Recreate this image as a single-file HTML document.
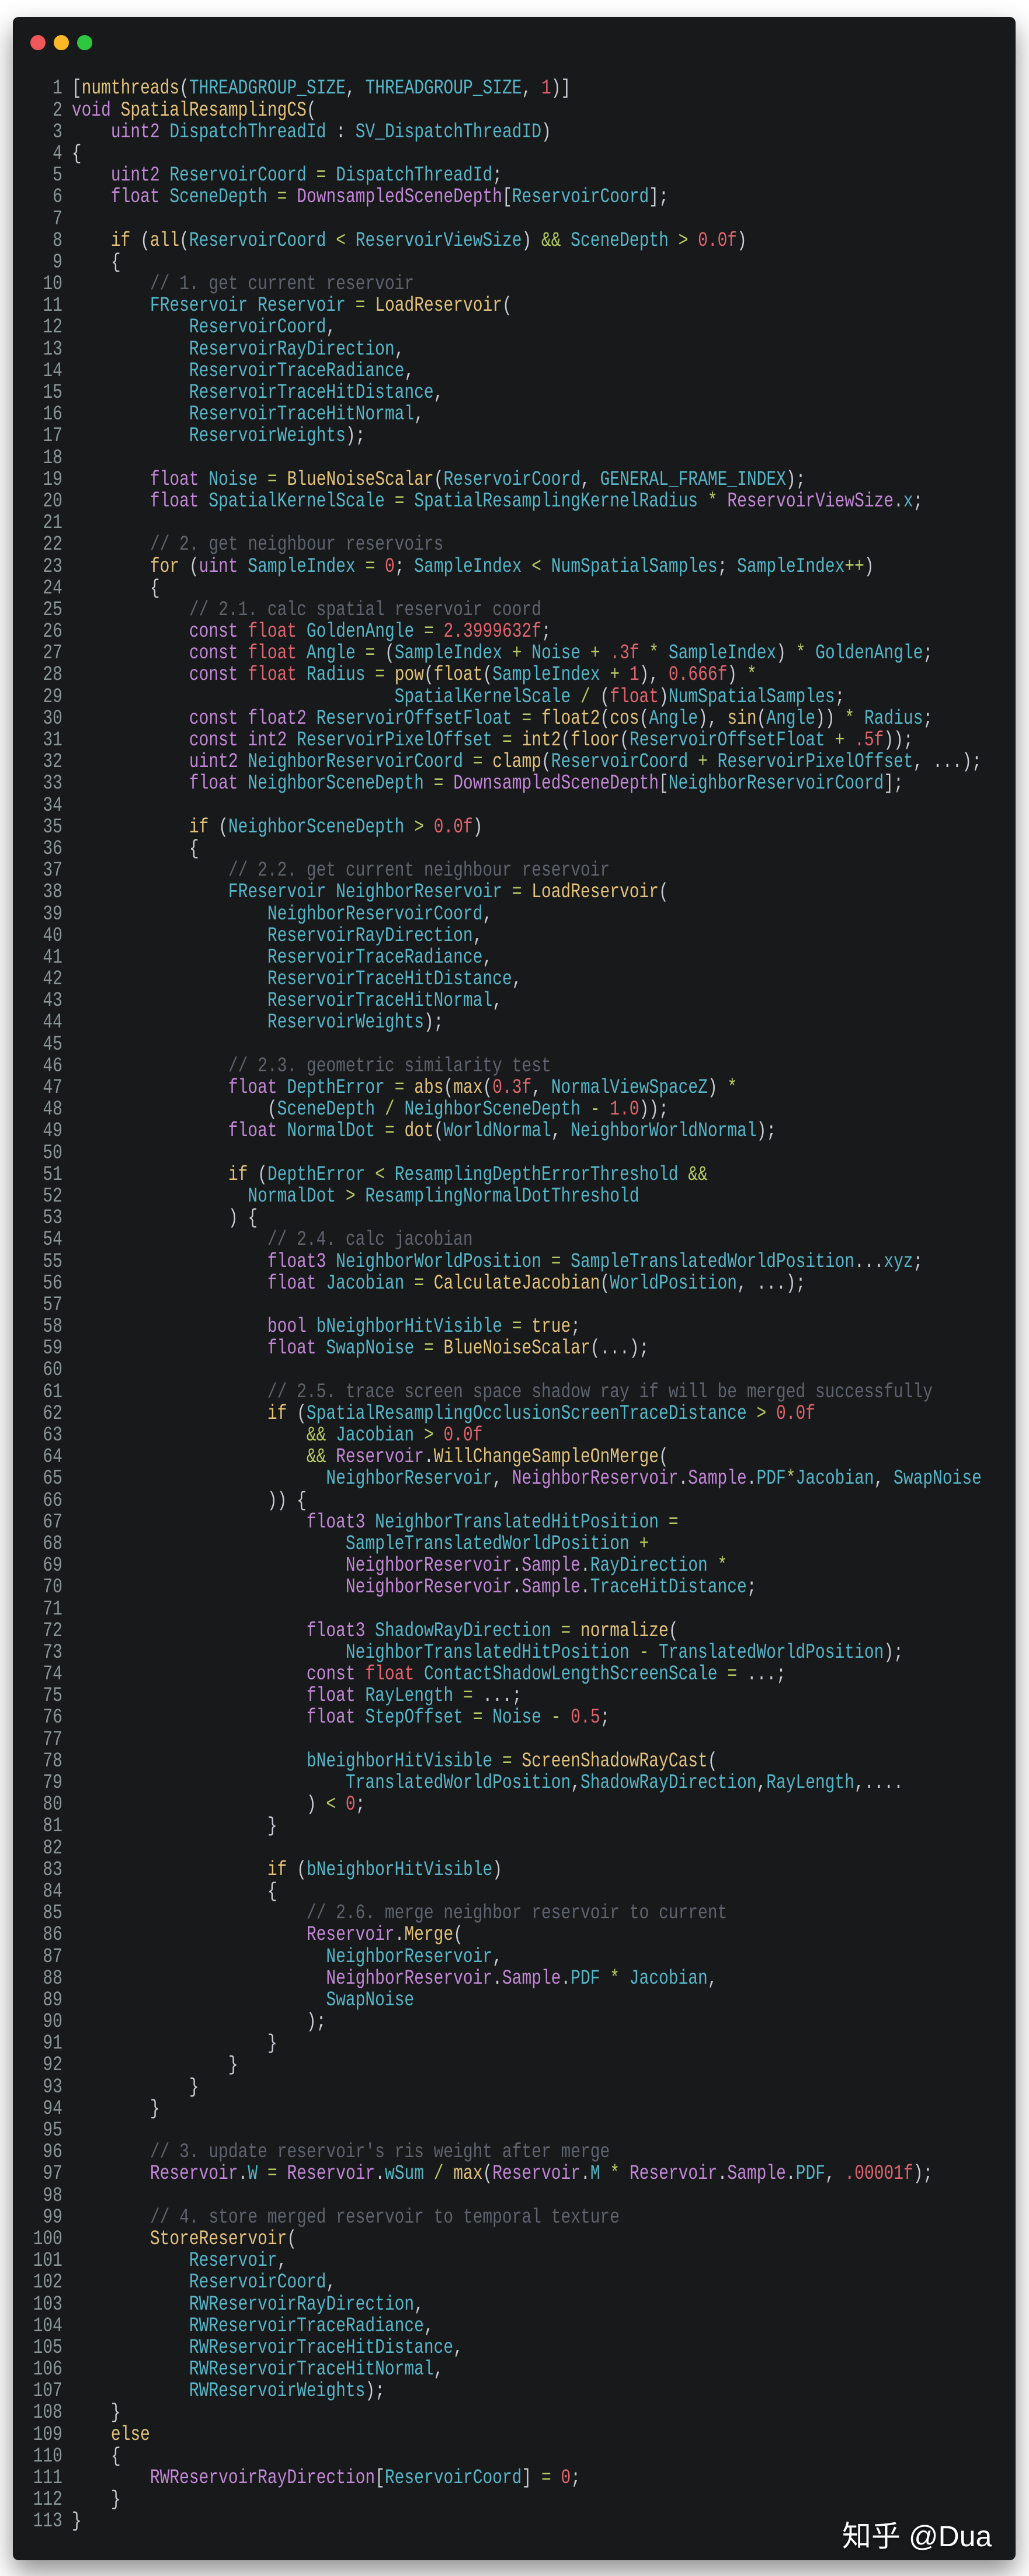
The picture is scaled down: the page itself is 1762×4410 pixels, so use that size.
<!DOCTYPE html>
<html><head><meta charset="utf-8">
<style>
html,body{margin:0;padding:0;background:#fff;}
body{width:1762px;height:4410px;position:relative;overflow:hidden;}
.win{position:absolute;left:22px;top:29px;width:1717px;height:4354px;background:#18191b;border-radius:10px;box-shadow:0 20px 45px rgba(0,0,0,0.45);}
.dot{position:absolute;top:31px;width:26px;height:26px;border-radius:50%;}
.code{position:absolute;left:-22px;top:104.4px;font-family:"Liberation Mono",monospace;font-size:35px;letter-spacing:0;line-height:37.2px;color:#c8ccd4;white-space:normal;counter-reset:ln;transform:scaleX(0.7976);transform-origin:0 0;width:2200px;}
.code div{height:37.2px;position:relative;padding-left:154px;white-space:pre;}
.code div::before{counter-increment:ln;content:counter(ln);position:absolute;left:0;width:134px;text-align:right;color:#8a9696;}
.k{color:#c287d6}.t{color:#56b6c8}.f{color:#e2c27a}.n{color:#e0646e}.o{color:#b3cc62}.c{color:#5d646e}
.wm{position:absolute;left:1442px;top:4302px;font-family:"Liberation Sans","Noto Sans CJK SC",sans-serif;font-size:50px;color:#fff;text-shadow:0 2px 4px rgba(0,0,0,.5);}
</style></head><body>
<div class="win">
<div class="dot" style="left:30px;background:#f0575a"></div>
<div class="dot" style="left:70px;background:#fbb928"></div>
<div class="dot" style="left:110px;background:#2ec840"></div>
<div class="code">
<div>[<span class="f">numthreads</span>(<span class="t">THREADGROUP_SIZE</span>, <span class="t">THREADGROUP_SIZE</span>, <span class="n">1</span>)]</div>
<div><span class="k">void</span> <span class="f">SpatialResamplingCS</span>(</div>
<div>    <span class="k">uint2</span> <span class="t">DispatchThreadId</span> : <span class="t">SV_DispatchThreadID</span>)</div>
<div>{</div>
<div>    <span class="k">uint2</span> <span class="t">ReservoirCoord</span> <span class="o">=</span> <span class="t">DispatchThreadId</span>;</div>
<div>    <span class="k">float</span> <span class="t">SceneDepth</span> <span class="o">=</span> <span class="k">DownsampledSceneDepth</span>[<span class="t">ReservoirCoord</span>];</div>
<div></div>
<div>    <span class="f">if</span> (<span class="f">all</span>(<span class="t">ReservoirCoord</span> <span class="o">&lt;</span> <span class="t">ReservoirViewSize</span>) <span class="o">&amp;&amp;</span> <span class="t">SceneDepth</span> <span class="o">&gt;</span> <span class="n">0.0f</span>)</div>
<div>    {</div>
<div>        <span class="c">// 1. get current reservoir</span></div>
<div>        <span class="t">FReservoir</span> <span class="t">Reservoir</span> <span class="o">=</span> <span class="f">LoadReservoir</span>(</div>
<div>            <span class="t">ReservoirCoord</span>,</div>
<div>            <span class="t">ReservoirRayDirection</span>,</div>
<div>            <span class="t">ReservoirTraceRadiance</span>,</div>
<div>            <span class="t">ReservoirTraceHitDistance</span>,</div>
<div>            <span class="t">ReservoirTraceHitNormal</span>,</div>
<div>            <span class="t">ReservoirWeights</span>);</div>
<div></div>
<div>        <span class="k">float</span> <span class="t">Noise</span> <span class="o">=</span> <span class="f">BlueNoiseScalar</span>(<span class="t">ReservoirCoord</span>, <span class="t">GENERAL_FRAME_INDEX</span>);</div>
<div>        <span class="k">float</span> <span class="t">SpatialKernelScale</span> <span class="o">=</span> <span class="t">SpatialResamplingKernelRadius</span> <span class="o">*</span> <span class="k">ReservoirViewSize</span>.<span class="t">x</span>;</div>
<div></div>
<div>        <span class="c">// 2. get neighbour reservoirs</span></div>
<div>        <span class="f">for</span> (<span class="k">uint</span> <span class="t">SampleIndex</span> <span class="o">=</span> <span class="n">0</span>; <span class="t">SampleIndex</span> <span class="o">&lt;</span> <span class="t">NumSpatialSamples</span>; <span class="t">SampleIndex</span><span class="o">++</span>)</div>
<div>        {</div>
<div>            <span class="c">// 2.1. calc spatial reservoir coord</span></div>
<div>            <span class="k">const</span> <span class="n">float</span> <span class="t">GoldenAngle</span> <span class="o">=</span> <span class="n">2.3999632f</span>;</div>
<div>            <span class="k">const</span> <span class="n">float</span> <span class="t">Angle</span> <span class="o">=</span> (<span class="t">SampleIndex</span> <span class="o">+</span> <span class="t">Noise</span> <span class="o">+</span> <span class="n">.3f</span> <span class="o">*</span> <span class="t">SampleIndex</span>) <span class="o">*</span> <span class="t">GoldenAngle</span>;</div>
<div>            <span class="k">const</span> <span class="n">float</span> <span class="t">Radius</span> <span class="o">=</span> <span class="f">pow</span>(<span class="f">float</span>(<span class="t">SampleIndex</span> <span class="o">+</span> <span class="n">1</span>), <span class="n">0.666f</span>) <span class="o">*</span></div>
<div>                                 <span class="t">SpatialKernelScale</span> <span class="o">/</span> (<span class="n">float</span>)<span class="t">NumSpatialSamples</span>;</div>
<div>            <span class="k">const</span> <span class="k">float2</span> <span class="t">ReservoirOffsetFloat</span> <span class="o">=</span> <span class="f">float2</span>(<span class="f">cos</span>(<span class="t">Angle</span>), <span class="f">sin</span>(<span class="t">Angle</span>)) <span class="o">*</span> <span class="t">Radius</span>;</div>
<div>            <span class="k">const</span> <span class="k">int2</span> <span class="t">ReservoirPixelOffset</span> <span class="o">=</span> <span class="f">int2</span>(<span class="f">floor</span>(<span class="t">ReservoirOffsetFloat</span> <span class="o">+</span> <span class="n">.5f</span>));</div>
<div>            <span class="k">uint2</span> <span class="t">NeighborReservoirCoord</span> <span class="o">=</span> <span class="f">clamp</span>(<span class="t">ReservoirCoord</span> <span class="o">+</span> <span class="t">ReservoirPixelOffset</span>, ...);</div>
<div>            <span class="k">float</span> <span class="t">NeighborSceneDepth</span> <span class="o">=</span> <span class="k">DownsampledSceneDepth</span>[<span class="t">NeighborReservoirCoord</span>];</div>
<div></div>
<div>            <span class="f">if</span> (<span class="t">NeighborSceneDepth</span> <span class="o">&gt;</span> <span class="n">0.0f</span>)</div>
<div>            {</div>
<div>                <span class="c">// 2.2. get current neighbour reservoir</span></div>
<div>                <span class="t">FReservoir</span> <span class="t">NeighborReservoir</span> <span class="o">=</span> <span class="f">LoadReservoir</span>(</div>
<div>                    <span class="t">NeighborReservoirCoord</span>,</div>
<div>                    <span class="t">ReservoirRayDirection</span>,</div>
<div>                    <span class="t">ReservoirTraceRadiance</span>,</div>
<div>                    <span class="t">ReservoirTraceHitDistance</span>,</div>
<div>                    <span class="t">ReservoirTraceHitNormal</span>,</div>
<div>                    <span class="t">ReservoirWeights</span>);</div>
<div></div>
<div>                <span class="c">// 2.3. geometric similarity test</span></div>
<div>                <span class="k">float</span> <span class="t">DepthError</span> <span class="o">=</span> <span class="f">abs</span>(<span class="f">max</span>(<span class="n">0.3f</span>, <span class="t">NormalViewSpaceZ</span>) <span class="o">*</span></div>
<div>                    (<span class="t">SceneDepth</span> <span class="o">/</span> <span class="t">NeighborSceneDepth</span> <span class="o">-</span> <span class="n">1.0</span>));</div>
<div>                <span class="k">float</span> <span class="t">NormalDot</span> <span class="o">=</span> <span class="f">dot</span>(<span class="t">WorldNormal</span>, <span class="t">NeighborWorldNormal</span>);</div>
<div></div>
<div>                <span class="f">if</span> (<span class="t">DepthError</span> <span class="o">&lt;</span> <span class="t">ResamplingDepthErrorThreshold</span> <span class="o">&amp;&amp;</span></div>
<div>                  <span class="t">NormalDot</span> <span class="o">&gt;</span> <span class="t">ResamplingNormalDotThreshold</span></div>
<div>                ) {</div>
<div>                    <span class="c">// 2.4. calc jacobian</span></div>
<div>                    <span class="k">float3</span> <span class="t">NeighborWorldPosition</span> <span class="o">=</span> <span class="t">SampleTranslatedWorldPosition</span>...<span class="t">xyz</span>;</div>
<div>                    <span class="k">float</span> <span class="t">Jacobian</span> <span class="o">=</span> <span class="f">CalculateJacobian</span>(<span class="t">WorldPosition</span>, ...);</div>
<div></div>
<div>                    <span class="k">bool</span> <span class="t">bNeighborHitVisible</span> <span class="o">=</span> <span class="f">true</span>;</div>
<div>                    <span class="k">float</span> <span class="t">SwapNoise</span> <span class="o">=</span> <span class="f">BlueNoiseScalar</span>(...);</div>
<div></div>
<div>                    <span class="c">// 2.5. trace screen space shadow ray if will be merged successfully</span></div>
<div>                    <span class="f">if</span> (<span class="t">SpatialResamplingOcclusionScreenTraceDistance</span> <span class="o">&gt;</span> <span class="n">0.0f</span></div>
<div>                        <span class="o">&amp;&amp;</span> <span class="t">Jacobian</span> <span class="o">&gt;</span> <span class="n">0.0f</span></div>
<div>                        <span class="o">&amp;&amp;</span> <span class="k">Reservoir</span>.<span class="f">WillChangeSampleOnMerge</span>(</div>
<div>                          <span class="t">NeighborReservoir</span>, <span class="k">NeighborReservoir</span>.<span class="k">Sample</span>.<span class="t">PDF</span><span class="o">*</span><span class="t">Jacobian</span>, <span class="t">SwapNoise</span></div>
<div>                    )) {</div>
<div>                        <span class="k">float3</span> <span class="t">NeighborTranslatedHitPosition</span> <span class="o">=</span></div>
<div>                            <span class="t">SampleTranslatedWorldPosition</span> <span class="o">+</span></div>
<div>                            <span class="k">NeighborReservoir</span>.<span class="k">Sample</span>.<span class="t">RayDirection</span> <span class="o">*</span></div>
<div>                            <span class="k">NeighborReservoir</span>.<span class="k">Sample</span>.<span class="t">TraceHitDistance</span>;</div>
<div></div>
<div>                        <span class="k">float3</span> <span class="t">ShadowRayDirection</span> <span class="o">=</span> <span class="f">normalize</span>(</div>
<div>                            <span class="t">NeighborTranslatedHitPosition</span> <span class="o">-</span> <span class="t">TranslatedWorldPosition</span>);</div>
<div>                        <span class="k">const</span> <span class="n">float</span> <span class="t">ContactShadowLengthScreenScale</span> <span class="o">=</span> ...;</div>
<div>                        <span class="k">float</span> <span class="t">RayLength</span> <span class="o">=</span> ...;</div>
<div>                        <span class="k">float</span> <span class="t">StepOffset</span> <span class="o">=</span> <span class="t">Noise</span> <span class="o">-</span> <span class="n">0.5</span>;</div>
<div></div>
<div>                        <span class="t">bNeighborHitVisible</span> <span class="o">=</span> <span class="f">ScreenShadowRayCast</span>(</div>
<div>                            <span class="t">TranslatedWorldPosition</span>,<span class="t">ShadowRayDirection</span>,<span class="t">RayLength</span>,....</div>
<div>                        ) <span class="o">&lt;</span> <span class="n">0</span>;</div>
<div>                    }</div>
<div></div>
<div>                    <span class="f">if</span> (<span class="t">bNeighborHitVisible</span>)</div>
<div>                    {</div>
<div>                        <span class="c">// 2.6. merge neighbor reservoir to current</span></div>
<div>                        <span class="k">Reservoir</span>.<span class="f">Merge</span>(</div>
<div>                          <span class="t">NeighborReservoir</span>,</div>
<div>                          <span class="k">NeighborReservoir</span>.<span class="k">Sample</span>.<span class="t">PDF</span> <span class="o">*</span> <span class="t">Jacobian</span>,</div>
<div>                          <span class="t">SwapNoise</span></div>
<div>                        );</div>
<div>                    }</div>
<div>                }</div>
<div>            }</div>
<div>        }</div>
<div></div>
<div>        <span class="c">// 3. update reservoir's ris weight after merge</span></div>
<div>        <span class="k">Reservoir</span>.<span class="t">W</span> <span class="o">=</span> <span class="k">Reservoir</span>.<span class="t">wSum</span> <span class="o">/</span> <span class="f">max</span>(<span class="k">Reservoir</span>.<span class="t">M</span> <span class="o">*</span> <span class="k">Reservoir</span>.<span class="k">Sample</span>.<span class="t">PDF</span>, <span class="n">.00001f</span>);</div>
<div></div>
<div>        <span class="c">// 4. store merged reservoir to temporal texture</span></div>
<div>        <span class="f">StoreReservoir</span>(</div>
<div>            <span class="t">Reservoir</span>,</div>
<div>            <span class="t">ReservoirCoord</span>,</div>
<div>            <span class="t">RWReservoirRayDirection</span>,</div>
<div>            <span class="t">RWReservoirTraceRadiance</span>,</div>
<div>            <span class="t">RWReservoirTraceHitDistance</span>,</div>
<div>            <span class="t">RWReservoirTraceHitNormal</span>,</div>
<div>            <span class="t">RWReservoirWeights</span>);</div>
<div>    }</div>
<div>    <span class="f">else</span></div>
<div>    {</div>
<div>        <span class="k">RWReservoirRayDirection</span>[<span class="t">ReservoirCoord</span>] <span class="o">=</span> <span class="n">0</span>;</div>
<div>    }</div>
<div>}</div>
</div>
</div>
<div class="wm">知乎 @Dua</div>
</body></html>
